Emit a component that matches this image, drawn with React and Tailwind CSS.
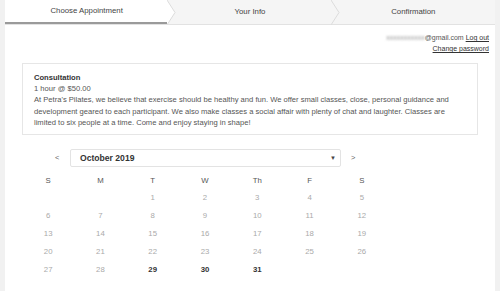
import { useState } from 'react';

const tabs = ['Choose Appointment', 'Your Info', 'Confirmation'];

const weeks = [
  [null, null, 1, 2, 3, 4, 5],
  [6, 7, 8, 9, 10, 11, 12],
  [13, 14, 15, 16, 17, 18, 19],
  [20, 21, 22, 23, 24, 25, 26],
  [27, 28, 29, 30, 31, null, null],
];

const available = [29, 30, 31];

function Chevron({ fill }) {
  return (
    <svg className="absolute top-0 -right-[8px] z-10" width="9" height="25" viewBox="0 0 9 25">
      <polygon points="0,0 8,12.5 0,25" fill={fill} />
      <polyline points="0,0 8,12.5 0,25" fill="none" stroke="#dcdcdc" strokeWidth="1" />
    </svg>
  );
}

export default function App() {
  const [month] = useState('October 2019');

  return (
    <div className="min-h-[291px] bg-[#f1f1f1] px-[5px] font-['Liberation_Sans',Arial,sans-serif] text-[#555]">
      <div className="min-h-[291px] bg-white">
        <nav className="flex h-[25px] border-b border-[#e2e2e2] text-[7.8px] text-[#444]">
          {tabs.map((tab, i) => (
            <div
              key={tab}
              className={
                i === 0
                  ? 'relative flex flex-1 items-center justify-center bg-white border-b-2 border-[#9a9a9a]'
                  : 'relative flex flex-1 items-center justify-center bg-[#f5f5f5]'
              }
            >
              {tab}
              {i < 2 && <Chevron fill={i === 0 ? '#ffffff' : '#f5f5f5'} />}
            </div>
          ))}
        </nav>

        <div className="flex flex-col items-end pr-[6px] pt-[7px] text-[7px] leading-[11px] text-[#555]">
          <div>
            <span className="blur-[1px] text-[#999]">xxxxxxxxxxx</span>
            @gmail.com <a className="underline text-[#333]">Log out</a>
          </div>
          <a className="underline text-[#333]">Change password</a>
        </div>

        <section className="mx-[17px] mt-[9px] border border-[#e6e6e6] px-[11px] pt-[8px] pb-[6px] text-[7.6px] leading-[11.2px]">
          <p className="font-bold text-[#333]">Consultation</p>
          <p>1 hour @ $50.00</p>
          <p>
            At Petra's Pilates, we believe that exercise should be healthy and fun. We offer small classes, close, personal guidance and
            development geared to each participant. We also make classes a social affair with plenty of chat and laughter. Classes are
            limited to six people at a time. Come and enjoy staying in shape!
          </p>
        </section>

        <div className="ml-[17px] mt-[14px] w-[366px]">
          <div className="flex items-center">
            <span className="w-[48px] pl-[33px] text-[7.5px] text-[#666]">&lt;</span>
            <div className="flex h-[18px] w-[271px] items-center justify-between rounded-[2px] border border-[#e3e3e3] pl-[9px] pr-[4px]">
              <span className="text-[8.6px] font-bold text-[#333]">{month}</span>
              <span className="text-[6px] text-[#444]">▼</span>
            </div>
            <span className="pl-[10px] text-[7.5px] text-[#666]">&gt;</span>
          </div>

          <div className="mt-[6px] grid grid-cols-7 text-center text-[7.8px]">
            {['S', 'M', 'T', 'W', 'Th', 'F', 'S'].map((d, i) => (
              <div key={i} className="h-[16px] leading-[16px] text-[#555]">
                {d}
              </div>
            ))}
            {weeks.flat().map((day, i) => (
              <div
                key={i}
                className={
                  available.includes(day)
                    ? 'h-[18px] leading-[18px] font-bold text-[#333]'
                    : 'h-[18px] leading-[18px] text-[#aaa]'
                }
              >
                {day}
              </div>
            ))}
          </div>
        </div>
      </div>
    </div>
  );
}
